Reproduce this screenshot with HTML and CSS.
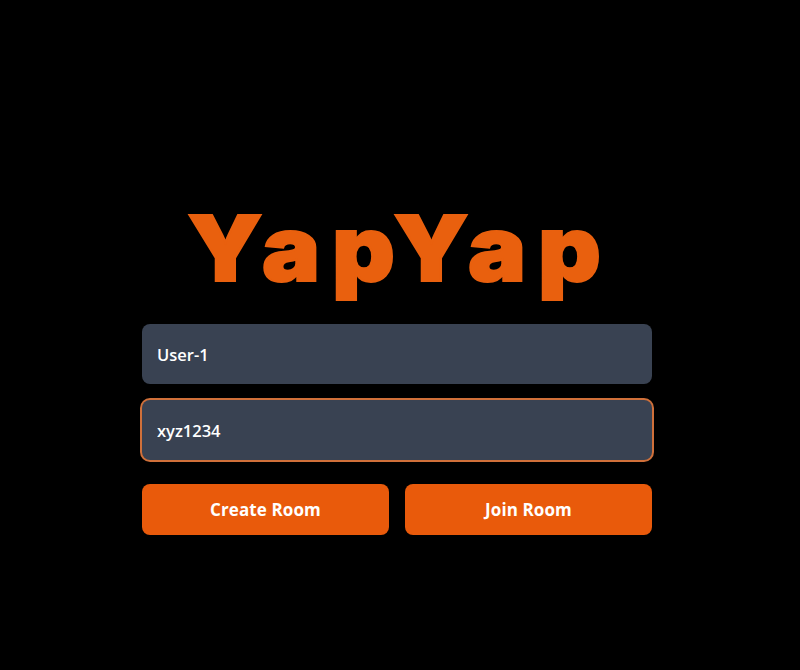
FILE: index.html
```html
<!DOCTYPE html>
<html>

<head>
    <meta charset="utf-8">
    <title>YapYap</title>
    <link rel="stylesheet" href="styles.css">
</head>

<body>
    <div class="container">
        <h1 class="logo">YapYap</h1>
        <div class="form">
            <input class="text-input" type="text" value="User-1">
            <input class="text-input active" type="text" value="xyz1234">
            <div class="buttons">
                <button class="room-button">Create Room</button>
                <button class="room-button">Join Room</button>
            </div>
        </div>
    </div>
</body>

</html>
```

FILE: styles.css
```css
* {
    box-sizing: border-box;
    margin: 0;
    padding: 0;
}

body {
    background-color: #000;
    font-family: "Open Sans", "Noto Sans", sans-serif;
    height: 670px;
    overflow: hidden;
}

.container {
    display: flex;
    flex-direction: column;
    align-items: center;
    padding-top: 192px;
    padding-right: 6px;
}

.logo {
    color: #e9600e;
    font-family: Inter, "Liberation Sans", sans-serif;
    font-size: 91px;
    font-weight: 900;
    letter-spacing: 11px;
    line-height: 112px;
    margin-bottom: 20px;
    padding-left: 5px;
    transform: scaleX(1.07);
    -webkit-text-stroke: 2px #e9600e;
}

.form {
    display: flex;
    flex-direction: column;
    width: 510px;
}

.text-input {
    background-color: #394252;
    border: none;
    border-radius: 8px;
    color: #fff;
    font-family: inherit;
    font-size: 16.5px;
    font-weight: 600;
    height: 60px;
    margin-bottom: 16px;
    outline: none;
    padding: 0 15px;
}

.text-input.active {
    box-shadow: 0 0 0 2px #d0703a;
    margin-bottom: 24px;
}

.buttons {
    display: flex;
    gap: 16px;
}

.room-button {
    background-color: #e95a0b;
    border: none;
    border-radius: 8px;
    color: #fff;
    cursor: pointer;
    flex: 1;
    font-family: inherit;
    font-size: 17px;
    font-weight: 700;
    height: 51px;
    letter-spacing: 0.1px;
}

.room-button:hover {
    background-color: #c2410c;
}
```
